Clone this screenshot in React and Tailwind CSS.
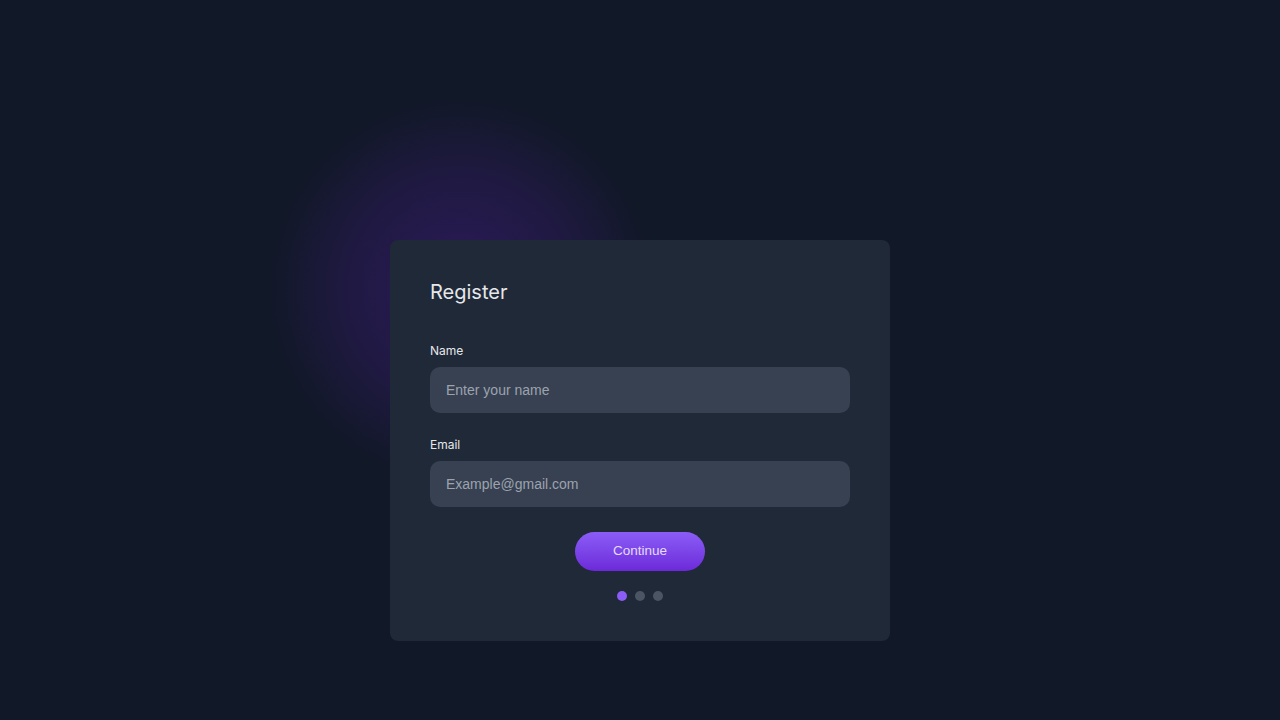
export default function App() {
  return (
    <div className="relative min-h-[720px] w-full overflow-hidden bg-[#111827] font-['Inter',sans-serif]">
      <div className="pointer-events-none absolute left-[265px] top-[95px] h-[390px] w-[390px] rounded-full bg-[radial-gradient(circle,rgba(76,29,149,0.45)_0%,rgba(76,29,149,0.25)_40%,rgba(76,29,149,0)_70%)]" />
      <div className="relative flex justify-center pt-[240px]">
        <div className="w-[500px] rounded-lg bg-[#1f2937] px-10 pb-10 pt-10">
          <h1 className="text-[20px] leading-6 font-normal text-[#e5e7eb]">Register</h1>
          <div className="mt-[39px]">
            <label className="block text-xs leading-4 font-normal text-[#e5e7eb]">Name</label>
            <input
              className="mt-2 h-[46px] w-full rounded-[10px] bg-[#374151] px-4 text-sm text-[#e5e7eb] placeholder-[#9ca3af] outline-none font-['Liberation_Sans',sans-serif]"
              placeholder="Enter your name"
            />
          </div>
          <div className="mt-6">
            <label className="block text-xs leading-4 font-normal text-[#e5e7eb]">Email</label>
            <input
              className="mt-2 h-[46px] w-full rounded-[10px] bg-[#374151] px-4 text-sm text-[#e5e7eb] placeholder-[#9ca3af] outline-none font-['Liberation_Sans',sans-serif]"
              placeholder="Example@gmail.com"
            />
          </div>
          <div className="mt-[25px] flex justify-center">
            <button className="h-[39px] w-[130px] rounded-full bg-gradient-to-b from-[#8b5cf6] to-[#6d28d9] text-[13.5px] text-[#e4dcfd] font-['Liberation_Sans',sans-serif]">
              Continue
            </button>
          </div>
          <div className="mt-5 flex justify-center gap-2">
            <span className="h-2.5 w-2.5 rounded-full bg-[#8b5cf6]" />
            <span className="h-2.5 w-2.5 rounded-full bg-[#4b5563]" />
            <span className="h-2.5 w-2.5 rounded-full bg-[#4b5563]" />
          </div>
        </div>
      </div>
    </div>
  );
}
